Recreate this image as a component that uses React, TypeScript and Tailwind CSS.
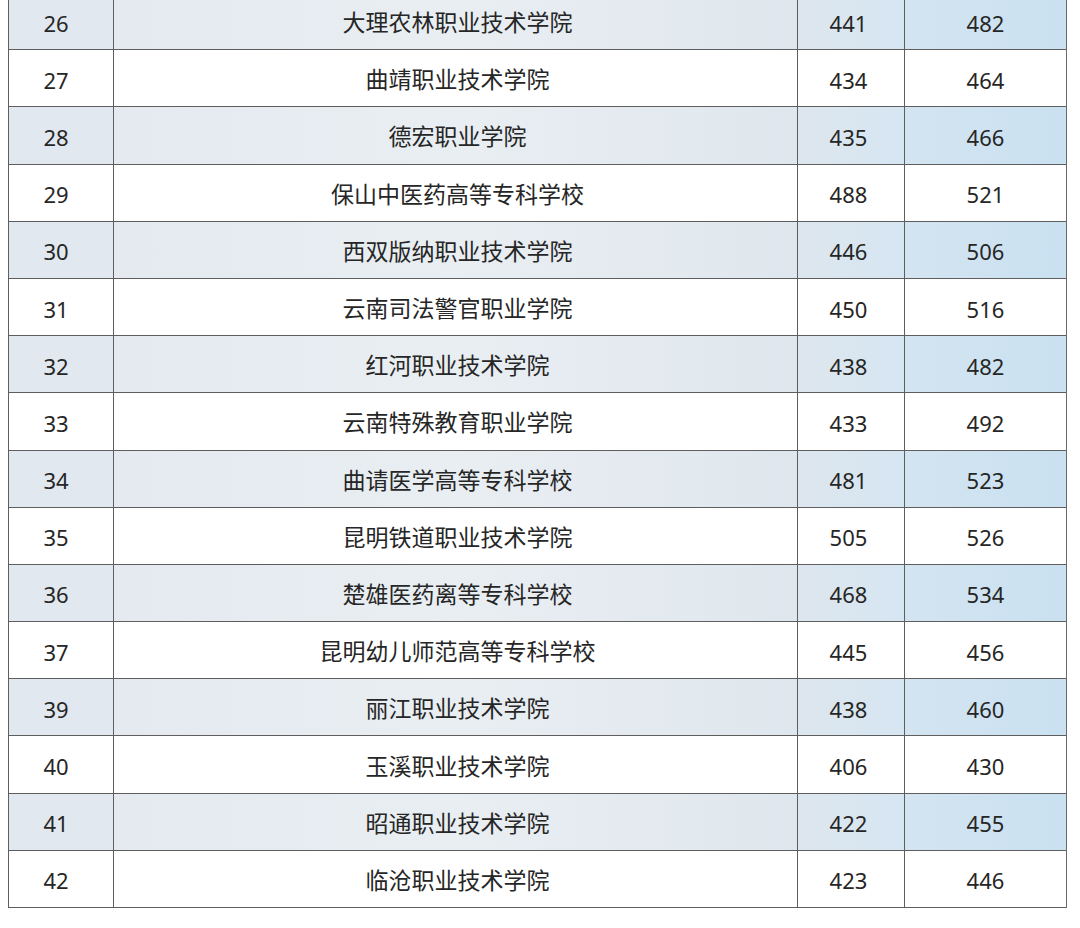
import { FC } from "react";

type Row = { no: string; name: string; a: string; b: string };

const rows: Row[] = [
  { no: "26", name: "大理农林职业技术学院", a: "441", b: "482" },
  { no: "27", name: "曲靖职业技术学院", a: "434", b: "464" },
  { no: "28", name: "德宏职业学院", a: "435", b: "466" },
  { no: "29", name: "保山中医药高等专科学校", a: "488", b: "521" },
  { no: "30", name: "西双版纳职业技术学院", a: "446", b: "506" },
  { no: "31", name: "云南司法警官职业学院", a: "450", b: "516" },
  { no: "32", name: "红河职业技术学院", a: "438", b: "482" },
  { no: "33", name: "云南特殊教育职业学院", a: "433", b: "492" },
  { no: "34", name: "曲请医学高等专科学校", a: "481", b: "523" },
  { no: "35", name: "昆明铁道职业技术学院", a: "505", b: "526" },
  { no: "36", name: "楚雄医药离等专科学校", a: "468", b: "534" },
  { no: "37", name: "昆明幼儿师范高等专科学校", a: "445", b: "456" },
  { no: "39", name: "丽江职业技术学院", a: "438", b: "460" },
  { no: "40", name: "玉溪职业技术学院", a: "406", b: "430" },
  { no: "41", name: "昭通职业技术学院", a: "422", b: "455" },
  { no: "42", name: "临沧职业技术学院", a: "423", b: "446" },
];

const App: FC = () => {
  return (
    <div
      className="w-[1080px] h-[928px] overflow-hidden bg-white text-[#262626]"
      style={{ fontFamily: '"Noto Sans", "Noto Sans CJK SC", sans-serif' }}
    >
      <div className="ml-[8px] mt-[-7px] w-[1059px] border-r border-[#6a6a6a]">
        {rows.map((r, i) => {
          const striped = i % 2 === 0;
          return (
            <div
              key={r.no}
              className="grid grid-cols-[105px_684px_107px_162px] h-[57.2px] border-b border-[#5e5e5e] text-[22px] leading-none"
            >
              <div
                className={`flex items-center justify-center pt-[3px] pr-[10px] border-l border-[#5e5e5e] ${
                  striped ? "bg-[#e1e8ef]" : "bg-white"
                }`}
              >
                {r.no}
              </div>
              <div
                className={`flex items-center justify-center pt-[3px] pl-[4px] text-[23px] border-l border-[#5e5e5e] ${
                  striped
                    ? "bg-gradient-to-r from-[#e4eaf0] via-[#e9eef2] to-[#dfe7ee]"
                    : "bg-white"
                }`}
              >
                {r.name}
              </div>
              <div
                className={`flex items-center justify-center pt-[3px] pr-[5px] border-l border-[#5e5e5e] ${
                  striped ? "bg-gradient-to-r from-[#dde6ee] to-[#d6e6f2]" : "bg-white"
                }`}
              >
                {r.a}
              </div>
              <div
                className={`flex items-center justify-center pt-[3px] border-l border-[#5e5e5e] ${
                  striped ? "bg-gradient-to-r from-[#d4e4f1] to-[#c9e1f1]" : "bg-white"
                }`}
              >
                {r.b}
              </div>
            </div>
          );
        })}
      </div>
    </div>
  );
};

export default App;
